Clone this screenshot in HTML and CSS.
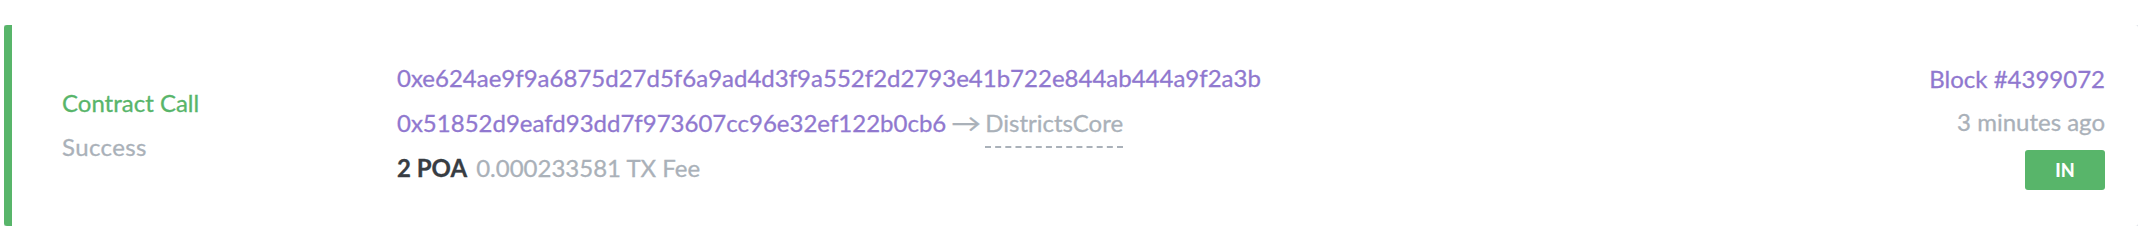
FILE: index.html
```html
<!DOCTYPE html>
<html lang="en">
<head>
<meta charset="utf-8">
<title>Transaction tile</title>
<link rel="stylesheet" href="styles.css">
</head>
<body>
  <div class="tile">
    <div class="tile-type">
      <div class="type-label">Contract Call</div>
      <div class="status">Success</div>
    </div>
    <div class="tile-main">
      <div class="line"><a class="hash" href="#">0xe624ae9f9a6875d27d5f6a9ad4d3f9a552f2d2793e41b722e844ab444a9f2a3b</a></div>
      <div class="line"><a class="hash" href="#">0x51852d9eafd93dd7f973607cc96e32ef122b0cb6</a><span class="arrow">→</span><span class="contract">DistrictsCore</span></div>
      <div class="line"><span class="value">2 POA</span><span class="fee">0.000233581 TX Fee</span></div>
    </div>
    <div class="tile-side">
      <div class="side-line"><a class="hash" href="#">Block #4399072</a></div>
      <div class="side-line muted">3 minutes ago</div>
      <span class="badge">IN</span>
    </div>
  </div>
</body>
</html>
```
FILE: styles.css
```css
html, body {
  background: #ffffff;
}
body {
  margin: 25px 14px 14px 4px;
  font-family: "Lato", "Noto Sans", sans-serif;
  font-size: 24px;
  color: #353a40;
  -webkit-text-stroke: 0.3px currentColor;
}
.tile {
  display: flex;
  align-items: flex-start;
  background: #ffffff;
  border-left: 8px solid #58b56a;
  border-radius: 3px;
  box-shadow: 0 0 0 1px #e2e5ea, 0 1px 3px rgba(30, 40, 60, 0.12);
  padding: 30px 33px 36px 50px;
  height: 135px;
}
.tile-type {
  width: 335px;
  flex: none;
  margin-top: 26px;
}
.type-label {
  color: #58b56a;
  line-height: 44px;
}
.status {
  color: #aab1b9;
  line-height: 44px;
  letter-spacing: 0.4px;
}
.tile-main {
  flex: 1;
}
.line {
  line-height: 45px;
  white-space: nowrap;
}
.hash {
  color: #9078cf;
  text-decoration: none;
}
.arrow {
  color: #aab1b9;
  margin: 0 7px 0 8px;
  display: inline-block;
  transform: scaleX(1.25);
}
.contract {
  color: #aab1b9;
  border-bottom: 2px dashed #aab1b9;
  padding-bottom: 9px;
}
.value {
  font-weight: 700;
  color: #383d43;
  margin-right: 9px;
}
.fee {
  color: #aab1b9;
}
.tile-side {
  display: flex;
  flex-direction: column;
  align-items: flex-end;
  margin-top: 2px;
}
.side-line {
  line-height: 43px;
  white-space: nowrap;
}
.muted {
  color: #aab1b9;
}
.badge {
  display: flex;
  align-items: center;
  justify-content: center;
  width: 80px;
  height: 40px;
  margin-top: 7px;
  background: #58b56a;
  color: #ffffff;
  border-radius: 3px;
  font-weight: 900;
  font-size: 18px;
  -webkit-text-stroke: 0;
}
```
